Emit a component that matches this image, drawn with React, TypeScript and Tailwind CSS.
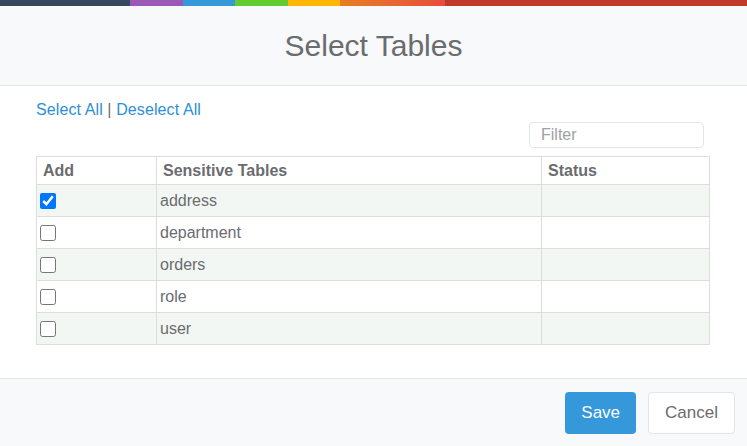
import React from "react"

const rows = [
  { name: "address", checked: true },
  { name: "department", checked: false },
  { name: "orders", checked: false },
  { name: "role", checked: false },
  { name: "user", checked: false },
]

export default function App() {
  return (
    <div className="w-[747px] h-[446px] overflow-hidden bg-white text-[#6a6c6f] font-['Liberation_Sans',Arial,sans-serif] flex flex-col">
      {/* Color line */}
      <div className="flex h-[6px] shrink-0">
        <div className="w-[130px] bg-[#34495e]"></div>
        <div className="w-[53px] bg-[#9b59b6]"></div>
        <div className="w-[52px] bg-[#3498db]"></div>
        <div className="w-[53px] bg-[#62cb31]"></div>
        <div className="w-[52px] bg-[#ffb606]"></div>
        <div className="w-[105px] bg-gradient-to-r from-[#e67e22] to-[#e74c3c]"></div>
        <div className="flex-1 bg-[#c0392b]"></div>
      </div>

      {/* Header */}
      <div className="h-[80px] shrink-0 bg-[#f7f9fa] border-b border-[#e4e5e7] flex items-center justify-center">
        <h4 className="text-[30px] leading-none">Select Tables</h4>
      </div>

      {/* Body */}
      <div className="flex-1 px-[36px] pt-[15px]">
        <div className="text-[16px] leading-[18px] tracking-[0.1px]">
          <a href="#" className="text-[#2d8fd5]">Select All</a>
          <span> | </span>
          <a href="#" className="text-[#2d8fd5]">Deselect All</a>
        </div>
        <div className="flex justify-end mt-[3px] mr-[7px]">
          <input
            type="text"
            placeholder="Filter"
            className="w-[175px] h-[26px] border border-[#e4e5e7] rounded-[4px] px-[11px] text-[16px] placeholder:text-[#a0a0a0] outline-none"
          />
        </div>
        <table className="mt-[8px] w-[674px] border-collapse text-[16px] table-fixed">
          <thead>
            <tr className="h-[28px]">
              <th className="w-[120px] border border-[#dddddd] text-left font-bold px-[6px] leading-[18px]">Add</th>
              <th className="w-[385px] border border-[#dddddd] text-left font-bold px-[6px] leading-[18px]">Sensitive Tables</th>
              <th className="border border-[#dddddd] text-left font-bold px-[6px] leading-[18px]">Status</th>
            </tr>
          </thead>
          <tbody>
            {rows.map((row, index) => (
              <tr key={row.name} className={`h-[32px] ${index % 2 === 0 ? "bg-[#f3f7f3]" : "bg-white"}`}>
                <td className="border border-[#dddddd] px-[3px] align-middle">
                  <input type="checkbox" defaultChecked={row.checked} className="block w-[16px] h-[16px]" />
                </td>
                <td className="border border-[#dddddd] px-[3px] align-middle">{row.name}</td>
                <td className="border border-[#dddddd] px-[3px]"></td>
              </tr>
            ))}
          </tbody>
        </table>
      </div>

      {/* Footer */}
      <div className="h-[68px] shrink-0 bg-[#f7f9fa] border-t border-[#e4e5e7] flex justify-end items-start pt-[13px] pr-[12px] gap-[12px]">
        <button className="h-[42px] px-[16px] rounded-[4px] bg-[#3498db] text-white text-[17px]">Save</button>
        <button className="h-[42px] px-[16px] rounded-[4px] bg-white border border-[#e4e5e7] text-[17px]">Cancel</button>
      </div>
    </div>
  )
}
